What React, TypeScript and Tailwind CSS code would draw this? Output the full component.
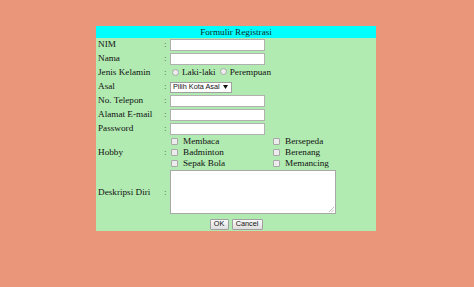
import React from "react";

const Box = () => (
  <span className="inline-block w-[7px] h-[7px] border border-[#a8a8a8] bg-[#ececec] rounded-[1px] shrink-0" />
);
const Radio = () => (
  <span className="inline-block w-[7px] h-[7px] border border-[#a8a8a8] bg-[#ececec] rounded-full shrink-0" />
);
const Input = () => <div className="w-[95px] h-[12px] bg-white border border-[#b0b0b0]" />;

function Row({ label, children, h = "h-[14px]" }: { label: string; children?: React.ReactNode; h?: string }) {
  return (
    <div className={`flex items-center ${h}`}>
      <div className="w-[68px] pl-[2px] leading-none">{label}</div>
      <div className="w-[6px] leading-none text-[#555]">:</div>
      <div className="flex-1 flex items-center">{children}</div>
    </div>
  );
}

export default function App() {
  return (
    <div className="w-[474px] h-[287px] bg-[#e9967a] pt-[26px] pl-[96px]">
      <div
        className="w-[280px] h-[205px] bg-[#b2ebb2] text-[9.2px] text-[#111] flex flex-col"
        style={{ fontFamily: '"Liberation Serif", "Times New Roman", serif' }}
      >
        <div className="h-[12px] bg-[#00ffff] text-center leading-[12px] text-[#0a2a2a]">Formulir Registrasi</div>
        <Row label="NIM"><Input /></Row>
        <Row label="Nama"><Input /></Row>
        <Row label="Jenis Kelamin">
          <div className="flex items-center pl-[2px] leading-none">
            <Radio />
            <span className="ml-[3px]">Laki-laki</span>
            <span className="ml-[4px]"><Radio /></span>
            <span className="ml-[3px]">Perempuan</span>
          </div>
        </Row>
        <Row label="Asal">
          <div
            className="h-[11px] w-[62px] bg-white border border-[#a0a0a0] flex items-center pl-[2px] text-[7.3px] leading-none"
            style={{ fontFamily: '"Liberation Sans", Arial, sans-serif' }}
          >
            <span>Pilih Kota Asal</span>
            <svg width="5" height="4" viewBox="0 0 5 4" className="ml-[3px]">
              <polygon points="0,0 5,0 2.5,4" fill="#111" />
            </svg>
          </div>
        </Row>
        <Row label="No. Telepon"><Input /></Row>
        <Row label="Alamat E-mail"><Input /></Row>
        <Row label="Password"><Input /></Row>
        <Row label="Hobby" h="h-[33px]">
          <div className="grid grid-cols-[103px_1fr] grid-rows-3 leading-none">
            {[
              ["Membaca", "Bersepeda"],
              ["Badminton", "Berenang"],
              ["Sepak Bola", "Memancing"],
            ].flatMap(([a, b]) => [
              <div key={a} className="h-[11px] flex items-center pl-[1px]">
                <Box />
                <span className="ml-[5px]">{a}</span>
              </div>,
              <div key={b} className="h-[11px] flex items-center">
                <Box />
                <span className="ml-[5px]">{b}</span>
              </div>,
            ])}
          </div>
        </Row>
        <Row label="Deskripsi Diri" h="h-[47px]">
          <div className="relative w-[166px] h-[44px] bg-white border border-[#a8a8a8] -mt-[1px]">
            <svg width="5" height="5" viewBox="0 0 5 5" className="absolute right-[1px] bottom-[1px]">
              <line x1="0" y1="5" x2="5" y2="0" stroke="#999" strokeWidth="0.6" />
              <line x1="2.5" y1="5" x2="5" y2="2.5" stroke="#999" strokeWidth="0.6" />
            </svg>
          </div>
        </Row>
        <div
          className="h-[15px] flex items-center justify-center gap-[3px] pt-[1px] text-[7.3px] leading-none"
          style={{ fontFamily: '"Liberation Sans", Arial, sans-serif' }}
        >
          <div className="h-[11px] w-[19px] flex items-center justify-center border border-[#a0a0a0] rounded-[1px] bg-gradient-to-b from-[#fafafa] to-[#dedede]">OK</div>
          <div className="h-[11px] w-[31px] flex items-center justify-center border border-[#a0a0a0] rounded-[1px] bg-gradient-to-b from-[#fafafa] to-[#dedede]">Cancel</div>
        </div>
      </div>
    </div>
  );
}
